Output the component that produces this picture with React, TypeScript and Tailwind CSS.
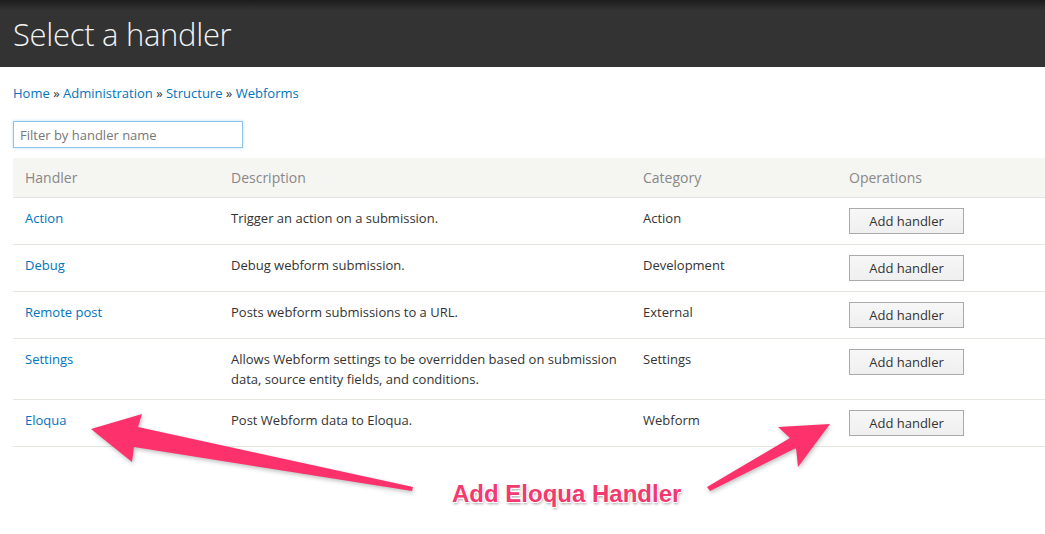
const rows = [
  { name: "Action", description: "Trigger an action on a submission.", category: "Action" },
  { name: "Debug", description: "Debug webform submission.", category: "Development" },
  { name: "Remote post", description: "Posts webform submissions to a URL.", category: "External" },
  {
    name: "Settings",
    description: "Allows Webform settings to be overridden based on submission data, source entity fields, and conditions.",
    category: "Settings",
  },
  { name: "Eloqua", description: "Post Webform data to Eloqua.", category: "Webform" },
];

const cols = "grid grid-cols-[206px_412px_206px_1fr]";

export default function App() {
  return (
    <div className="relative min-h-[534px] overflow-hidden bg-white font-['Open_Sans',sans-serif] text-[#333]">
      <header className="flex h-[67px] items-center bg-[linear-gradient(to_bottom,#1c1c1c_0px,#333_10px,#333_100%)] px-[13px]">
        <h1 className="pt-[2px] text-[31px] font-light leading-none tracking-[-0.3px] text-[#f2f2f2]">Select a handler</h1>
      </header>

      <main className="pl-[13px]">
        <nav className="mt-[17px] text-[13px] leading-[18px] text-[#0074bd]">
          <a href="#">Home</a>
          <span className="text-[#333]"> » </span>
          <a href="#">Administration</a>
          <span className="text-[#333]"> » </span>
          <a href="#">Structure</a>
          <span className="text-[#333]"> » </span>
          <a href="#">Webforms</a>
        </nav>

        <input
          autoFocus
          type="search"
          placeholder="Filter by handler name"
          className="mt-[19px] block h-[27px] w-[230px] border border-[#8ec3ec] px-[6px] text-[13px] text-[#333] shadow-[0_0_3px_#b7dcf8] outline-none placeholder:text-[#777]"
        />

        <div className="mt-[10px]">
          <div className={`${cols} h-[40px] items-center border-b border-[#e6e4df] bg-[#f5f5f2] text-[14px] text-[#888]`}>
            <div className="px-[12px]">Handler</div>
            <div className="px-[12px]">Description</div>
            <div className="px-[12px]">Category</div>
            <div className="px-[12px]">Operations</div>
          </div>
          {rows.map((row) => (
            <div key={row.name} className={`${cols} border-b border-[#e6e4df] text-[13px] leading-[20px]`}>
              <div className="px-[12px] py-[10px]">
                <a href="#" className="text-[#0074bd]">
                  {row.name}
                </a>
              </div>
              <div className="px-[12px] py-[10px]">{row.description}</div>
              <div className="px-[12px] py-[10px]">{row.category}</div>
              <div className="px-[12px] py-[10px]">
                <button className="block h-[26px] w-[115px] border border-[#aaa] bg-[linear-gradient(#f7f7f7,#efefef)] text-[13px] leading-none text-[#333]">
                  Add handler
                </button>
              </div>
            </div>
          ))}
        </div>

        <p className="mt-[35px] pl-[439px] font-['Liberation_Sans',Arial,sans-serif] text-[24px] font-bold leading-none text-[#f33a6f] [text-shadow:1px_1px_0_#fff,-1px_-1px_0_#fff,1px_-1px_0_#fff,-1px_1px_0_#fff,1px_2px_3px_rgba(0,0,0,0.4)]">
          Add Eloqua Handler
        </p>
      </main>

      {/* annotation arrows */}
      <svg
        className="pointer-events-none absolute left-0 top-0 drop-shadow-[1px_2px_2px_rgba(0,0,0,0.25)]"
        width="1045"
        height="534"
        viewBox="0 0 1045 534"
      >
        <polygon
          fill="#fd316c"
          points="413,487 138,427 142,414 91,429 132,462 134,447 412,491"
        />
        <polygon
          fill="#fd316c"
          points="707,487 790,438 778,427 830,424 798,467 796,448 710,491"
        />
      </svg>
    </div>
  );
}
